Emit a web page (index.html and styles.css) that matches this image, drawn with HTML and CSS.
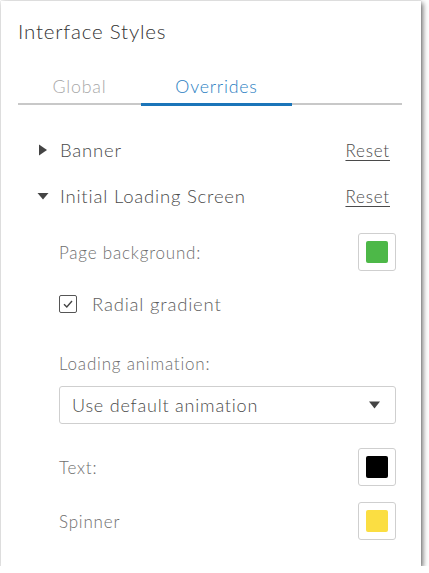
FILE: index.html
```html
<!DOCTYPE html>
<html>
<head>
<meta charset="utf-8">
<link rel="stylesheet" href="styles.css">
</head>
<body>
<div class="panel">
  <div class="title">Interface Styles</div>
  <div class="tabs">
    <div class="tab t-global">Global</div>
    <div class="tab t-over active">Overrides</div>
  </div>
  <div class="section-row first">
    <svg class="caret" width="12" height="12" viewBox="0 0 12 12"><path d="M2 0.5 L10 6 L2 11.5 Z" fill="#444"/></svg>
    <span class="section-name">Banner</span>
    <a class="reset">Reset</a>
  </div>
  <div class="section-row">
    <svg class="caret" width="12" height="12" viewBox="0 0 12 12"><path d="M0.5 3 L11.5 3 L6 9.5 Z" fill="#444"/></svg>
    <span class="section-name">Initial Loading Screen</span>
    <a class="reset">Reset</a>
  </div>
  <div class="sub">
    <div class="field-row r-page">
      <span class="label">Page background:</span>
      <div class="swatch"><div class="chip green"></div></div>
    </div>
    <div class="check-row">
      <span class="checkbox"><svg width="14" height="14" viewBox="0 0 14 14"><path d="M3 7.2 L5.8 10 L11 4" fill="none" stroke="#444" stroke-width="1.4"/></svg></span>
      <span class="check-label">Radial gradient</span>
    </div>
    <div class="label block">Loading animation:</div>
    <div class="select">
      <span>Use default animation</span>
      <svg width="11" height="8" viewBox="0 0 11 8"><path d="M0 0.5 L11 0.5 L5.5 7.5 Z" fill="#444"/></svg>
    </div>
    <div class="field-row r-text">
      <span class="label">Text:</span>
      <div class="swatch"><div class="chip black"></div></div>
    </div>
    <div class="field-row r-spin">
      <span class="label">Spinner</span>
      <div class="swatch"><div class="chip yellow"></div></div>
    </div>
  </div>
</div>
</body>
</html>
```

FILE: styles.css
```css
html, body {
  margin: 0;
  background: #ffffff;
}
body {
  font-family: Lato, "Open Sans", sans-serif;
  font-weight: 300;
  letter-spacing: 0.05em;
  padding: 1px 0 0 1px;
}
.panel {
  width: 420px;
  height: 565px;
  box-sizing: border-box;
  background: #fff;
  box-shadow: 2px 2px 5px rgba(0, 0, 0, 0.55), 0 0 1px rgba(0,0,0,0.25);
  padding: 0 19px 0 17px;
}
.title {
  padding-top: 18px;
  line-height: 24px;
  font-size: 20.5px;
  color: #333;
}
.tabs {
  margin-top: 32px;
  display: flex;
  background: linear-gradient(#c8c8c8, #c8c8c8) left bottom 1px / 100% 2px no-repeat;
}
.tab {
  padding-bottom: 6px;
  line-height: 22px;
  font-size: 17.8px;
  text-align: center;
  color: #a8a8a8;
  border-bottom: 3px solid transparent;
}
.t-global { width: 123px; }
.t-over { width: 151px; }
.tab.active {
  color: #2a80c2;
  border-bottom-color: #1b75b9;
}
.section-row {
  display: flex;
  align-items: center;
  height: 46px;
  padding: 0 12px 0 19px;
}
.section-row.first {
  margin-top: 21px;
}
.caret {
  flex: none;
  margin-right: 11px;
}
.section-name {
  flex: 1;
  font-size: 18.5px;
  color: #4a4a4a;
}
.reset {
  font-size: 17px;
  color: #4a4a4a;
  text-decoration: underline;
  text-underline-offset: 3px;
}
.sub {
  padding: 0 6px 0 41px;
}
.field-row {
  display: flex;
  align-items: center;
  justify-content: space-between;
  height: 38px;
}
.r-page { margin-top: 14px; }
.r-text { margin-top: 24px; }
.r-spin { margin-top: 16px; }
.label {
  font-size: 17px;
  color: #6e6e6e;
}
.label.block {
  margin-top: 38px;
  line-height: 20px;
}
.swatch {
  width: 38px;
  height: 38px;
  box-sizing: border-box;
  border: 1px solid #cfcfcf;
  border-radius: 3px;
  padding: 7px;
}
.chip {
  width: 22px;
  height: 22px;
  border-radius: 2px;
}
.green { background: #4db848; }
.black { background: #000; }
.yellow { background: #fbde42; }
.check-row {
  display: flex;
  align-items: center;
  height: 24px;
  margin-top: 21px;
}
.checkbox {
  width: 18px;
  height: 18px;
  box-sizing: border-box;
  border: 1.5px solid #555;
  border-radius: 2px;
  display: flex;
  align-items: center;
  justify-content: center;
  margin-right: 15px;
}
.check-label {
  font-size: 18.5px;
  color: #5e5e5e;
}
.select {
  margin-top: 12px;
  height: 38px;
  box-sizing: border-box;
  border: 1px solid #cfcfcf;
  border-radius: 3px;
  display: flex;
  align-items: center;
  justify-content: space-between;
  padding: 0 15px 0 12px;
  font-size: 18px;
  color: #4a4a4a;
}
```
